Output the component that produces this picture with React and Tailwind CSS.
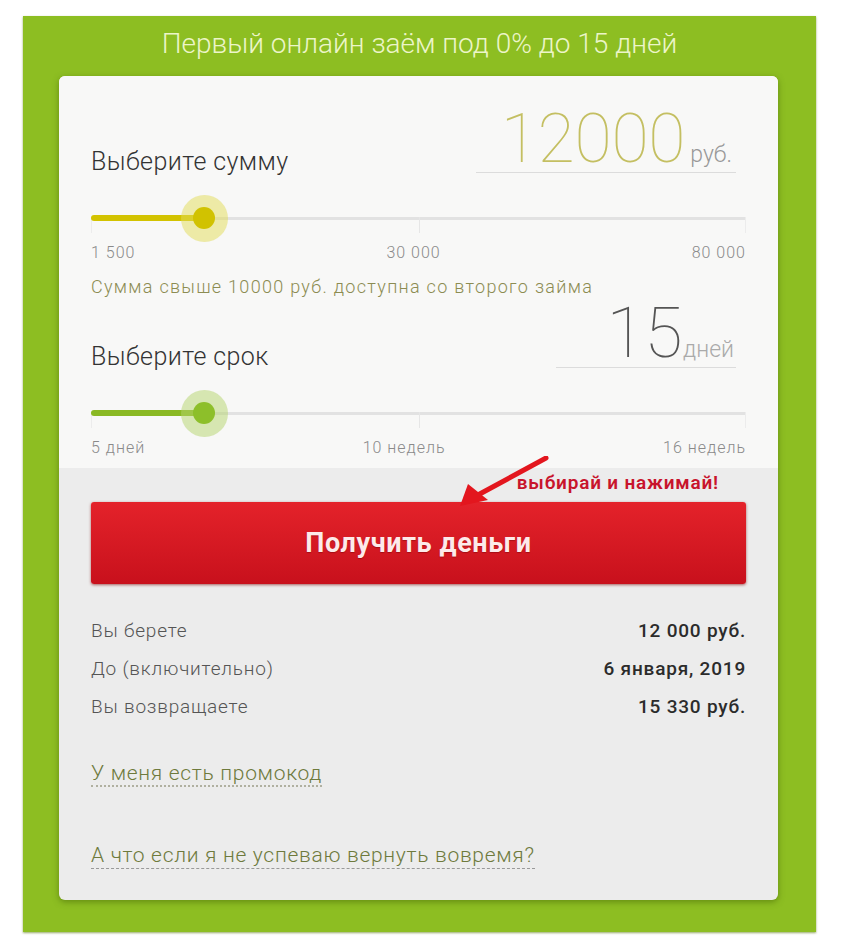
import React from "react";

function Slider({ fill, dot, halo, pos }) {
  return (
    <div className="relative h-[47px]">
      <div className="absolute left-0 right-0 top-[22px] h-[3px] bg-[#e2e2e2]" />
      <div className="absolute left-0 top-[22px] w-px h-[16px] bg-[#ececec]" />
      <div className="absolute left-1/2 top-[22px] w-px h-[16px] bg-[#e6e6e6]" />
      <div className="absolute right-0 top-[22px] w-px h-[16px] bg-[#ececec]" />
      <div className={`absolute left-0 top-[20px] h-[6px] rounded-full ${fill}`} style={{ width: pos }} />
      <div className={`absolute top-0 w-[47px] h-[47px] rounded-full ${halo}`} style={{ left: pos - 23.5 }} />
      <div className={`absolute top-[12px] w-[22px] h-[22px] rounded-full ${dot}`} style={{ left: pos - 11 }} />
    </div>
  );
}

export default function App() {
  return (
    <div className="w-[844px] h-[950px] bg-white pt-[16px] pl-[23px]" style={{ fontFamily: "Roboto, 'Noto Sans', sans-serif" }}>
      <div className="w-[793px] h-[916px] bg-[#8dbe22] flex flex-col shadow-[0_1px_2px_rgba(80,110,0,0.6)]">
        <div className="h-[60px] flex items-center justify-center pb-[4px]">
          <span className="text-[28px] font-light text-[#ecf5c8]">Первый онлайн заём под 0% до 15 дней</span>
        </div>
        <div className="ml-[36px] w-[719px] h-[824px] rounded-[6px] overflow-hidden bg-[#ececec] shadow-[0_2px_6px_rgba(60,90,0,0.5)] flex flex-col">
          {/* top section */}
          <div className="h-[392px] bg-[#f8f8f7] px-[32px] pt-[20px]">
            <div className="flex justify-between items-end h-[77px]">
              <div className="text-[25px] font-light text-[#333] leading-[30px] mb-[-4px] tracking-[0.4px]">Выберите сумму</div>
              <div className="w-[260px] mr-[10px] border-b border-[#dcdcdc] flex justify-end items-baseline pr-[4px]">
                <span className="text-[68px] font-thin text-[#c4bf62] leading-[53px] tracking-[-0.3px]">12000</span>
                <span className="text-[23px] font-light text-[#999] ml-[5px]">руб.</span>
              </div>
            </div>
            <div className="mt-[22px]">
              <Slider pos={113} fill="bg-[#d3c300]" dot="bg-[#d1c200]" halo="bg-[#e2dc55]/50" />
            </div>
            <div className="flex justify-between text-[16px] font-light text-[#8a8a8a] leading-[20px] mt-[1px] tracking-[1px]">
              <span>1 500</span>
              <span>30 000</span>
              <span>80 000</span>
            </div>
            <div className="text-[18px] font-light text-[#8c8c52] leading-[22px] mt-[13px] tracking-[1.3px]">Сумма свыше 10000 руб. доступна со второго займа</div>

            <div className="flex justify-between items-end h-[68px] mt-[2px]">
              <div className="text-[25px] font-light text-[#333] leading-[30px] mb-[-4px] tracking-[0.4px]">Выберите срок</div>
              <div className="w-[180px] mr-[10px] border-b border-[#dcdcdc] flex justify-end items-baseline pr-[2px]">
                <span className="text-[70px] font-thin text-[#555] leading-[54px] tracking-[-0.5px]">15</span>
                <span className="text-[23px] font-light text-[#aaa] ml-[1px]">дней</span>
              </div>
            </div>
            <div className="mt-[22px]">
              <Slider pos={113} fill="bg-[#8ab924]" dot="bg-[#8dbf2a]" halo="bg-[#b4d36b]/50" />
            </div>
            <div className="flex justify-between text-[16px] font-light text-[#8a8a8a] leading-[20px] mt-[1px] tracking-[1px]">
              <span>5 дней</span>
              <span>10 недель</span>
              <span>16 недель</span>
            </div>
          </div>

          {/* lower section */}
          <div className="relative flex-1 px-[32px]">
            <svg className="absolute left-[395px] top-[-12px]" width="100" height="60" viewBox="0 0 100 60">
              <line x1="92" y1="2" x2="22" y2="40" stroke="#e3161e" strokeWidth="5" strokeLinecap="round" />
              <polygon points="6,50 14,28 34,44" fill="#e3161e" />
            </svg>
            <div className="flex justify-end pr-[27px] pt-[2px] h-[34px]">
              <span className="text-[19px] font-semibold text-[#c8142c] tracking-[0.8px] leading-[26px]">выбирай и нажимай!</span>
            </div>
            <button className="w-full h-[82px] rounded-[3px] bg-gradient-to-b from-[#e4222a] to-[#c8101c] shadow-[0_1px_3px_rgba(120,0,0,0.6)] flex items-center justify-center">
              <span className="text-[27px] font-bold text-[#fdeaea] tracking-[0.6px] [text-shadow:0_1px_1px_rgba(100,0,0,0.4)]">Получить деньги</span>
            </button>
            <div className="mt-[35px] flex flex-col gap-[14px]">
              {[
                ["Вы берете", "12 000 руб."],
                ["До (включительно)", "6 января, 2019"],
                ["Вы возвращаете", "15 330 руб."],
              ].map(([a, b]) => (
                <div key={a} className="flex justify-between items-center h-[24px]">
                  <span className="text-[19px] font-light text-[#555] tracking-[0.8px]">{a}</span>
                  <span className="text-[19px] font-medium text-[#2b2b2b] tracking-[0.8px]">{b}</span>
                </div>
              ))}
            </div>
            <div className="mt-[40px]">
              <span className="text-[21px] font-light text-[#6e7a3c] border-b-2 border-dotted border-[#b0b0a0] pb-[0px] tracking-[0.7px] leading-[28px]">У меня есть промокод</span>
            </div>
            <div className="mt-[54px]">
              <span className="text-[21px] font-light text-[#6e7a3c] border-b border-dashed border-[#999] pb-[1px] tracking-[0.7px] leading-[28px]">А что если я не успеваю вернуть вовремя?</span>
            </div>
          </div>
        </div>
      </div>
    </div>
  );
}
